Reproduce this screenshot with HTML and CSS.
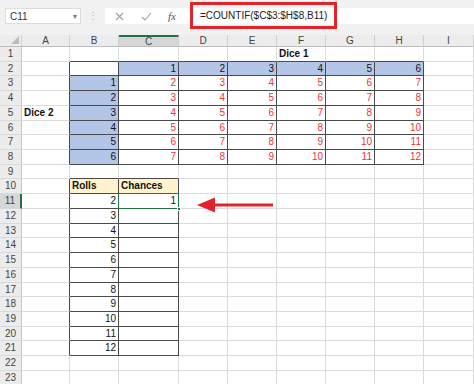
FILE: index.html
```html
<!DOCTYPE html>
<html lang="en">
<head>
  <meta charset="UTF-8">
  <meta name="viewport" content="width=device-width, initial-scale=1.0">
  <title>Dice COUNTIF</title>
  <link rel="stylesheet" href="styles.css">
</head>
<body>
  <div class="toolbar">
    <div class="name-box">C11<span class="drop">&#9662;</span></div>
    <div class="grip">&#8942;</div>
    <div class="formula">
      <div class="fx-icons">
        <svg class="icon" width="9" height="9" viewBox="0 0 9 9"><path d="M1 1L8 8M8 1L1 8" stroke="#a0a0a0" stroke-width="1.1" fill="none"/></svg>
        <svg class="icon" width="11" height="9" viewBox="0 0 11 9"><path d="M1 5L4 8L10 1" stroke="#a0a0a0" stroke-width="1.1" fill="none"/></svg>
        <span class="fx">fx</span>
      </div>
      <div class="formula-text">=COUNTIF($C$3:$H$8,B11)</div>
    </div>
  </div>

  <div class="sheet" id="sheet"></div>

  <svg class="arrow" width="80" height="18" viewBox="0 0 80 18">
    <path d="M18 7.5H77V10.5H18Z" fill="#e3232c"/>
    <path d="M1 9L19 1.5V16.5Z" fill="#e3232c"/>
  </svg>

  <script>
    const sheet = document.getElementById('sheet');
    const letters = ['A', 'B', 'C', 'D', 'E', 'F', 'G', 'H', 'I'];
    const tables = [
      { c1: 2, c2: 8, r1: 2, r2: 8 },
      { c1: 2, c2: 3, r1: 10, r2: 21 }
    ];

    const data = {};
    data['F1'] = { text: 'Dice 1', cls: 'bold' };
    data['A5'] = { text: 'Dice 2', cls: 'bold' };
    for (let i = 1; i <= 6; i++) {
      data[letters[i + 1] + '2'] = { text: i, cls: 'num blue' };
      data['B' + (i + 2)] = { text: i, cls: 'num blue' };
      for (let j = 1; j <= 6; j++) {
        data[letters[j + 1] + (i + 2)] = { text: i + j, cls: 'num red' };
      }
    }
    data['B10'] = { text: 'Rolls', cls: 'bold cream' };
    data['C10'] = { text: 'Chances', cls: 'bold cream' };
    for (let n = 2; n <= 12; n++) {
      data['B' + (n + 9)] = { text: n, cls: 'num' };
    }
    data['C11'] = { text: 1, cls: 'num selected' };

    function inTable(c, r) {
      return tables.some(t => c >= t.c1 && c <= t.c2 && r >= t.r1 && r <= t.r2);
    }

    function addCell(cls, text) {
      const el = document.createElement('div');
      el.className = cls;
      if (text !== undefined) el.textContent = text;
      sheet.appendChild(el);
    }

    addCell('corner');
    letters.forEach(l => addCell('col-head' + (l === 'C' ? ' active' : ''), l));
    for (let r = 1; r <= 23; r++) {
      addCell('row-head' + (r === 11 ? ' active' : ''), r);
      for (let c = 1; c <= 9; c++) {
        const d = data[letters[c - 1] + r] || {};
        let cls = 'cell ' + (d.cls || '');
        if (inTable(c, r) || inTable(c + 1, r)) cls += ' edge-r';
        if (inTable(c, r) || inTable(c, r + 1)) cls += ' edge-b';
        addCell(cls, d.text);
      }
    }
  </script>
</body>
</html>
```

FILE: styles.css
```css
body {
  margin: 0;
  font-family: "Liberation Sans", Arial, sans-serif;
  background-color: #fff;
  overflow: hidden;
  position: relative;
  height: 384px;
}
.toolbar {
  height: 35px;
  box-sizing: border-box;
  background-color: #f1f1f1;
  display: flex;
  align-items: flex-start;
  padding: 8px 0 0 5px;
}
.name-box {
  width: 76px;
  height: 16px;
  box-sizing: border-box;
  background-color: #fff;
  border: 1px solid #dedede;
  display: flex;
  align-items: center;
  justify-content: space-between;
  padding: 0 3px 0 4px;
  font-size: 10px;
  color: #333;
}
.drop {
  font-size: 8px;
  color: #777;
}
.grip {
  width: 24px;
  height: 16px;
  line-height: 16px;
  text-align: center;
  font-size: 10px;
  color: #b0b0b0;
}
.formula {
  flex: 1;
  height: 16px;
  background-color: #fff;
  display: flex;
  align-items: center;
}
.fx-icons {
  display: flex;
  align-items: center;
  width: 95px;
  padding-left: 10px;
  box-sizing: border-box;
}
.icon {
  margin-right: 17px;
}
.icon + .icon {
  margin-right: 16px;
}
.fx {
  font-family: "Liberation Serif", serif;
  font-style: italic;
  font-size: 11px;
  color: #555;
}
.formula-text {
  position: relative;
  font-size: 10px;
  color: #222;
  line-height: 16px;
}
.formula-text::after {
  content: "";
  position: absolute;
  left: -10px;
  right: -10px;
  top: -6px;
  bottom: -5px;
  border: 3px solid #e0242c;
}

.sheet {
  display: grid;
  grid-template-columns: 22px 48px 49px 60px 49px 49px 49px 49px 49px 50px;
  grid-template-rows: 12px repeat(23, 14.73px);
}
.corner {
  background-color: #ececec;
  border-right: 1px solid #cfcfcf;
  border-bottom: 1px solid #bdbdbd;
  position: relative;
}
.corner::after {
  content: "";
  position: absolute;
  right: 2px;
  bottom: 2px;
  border-left: 8px solid transparent;
  border-bottom: 8px solid #bcbcbc;
}
.col-head {
  background-color: #ececec;
  border-right: 1px solid #d0d0d0;
  border-bottom: 1px solid #bdbdbd;
  font-size: 10px;
  line-height: 11px;
  text-align: center;
  color: #444;
}
.col-head.active {
  background-color: #d6d6d6;
  border-top: 2px solid #217346;
  line-height: 9px;
}
.row-head {
  background-color: #ececec;
  border-right: 1px solid #c6c6c6;
  border-bottom: 1px solid #dadada;
  font-size: 10px;
  line-height: 14px;
  text-align: center;
  color: #444;
}
.row-head.active {
  background-color: #d6d6d6;
  border-right: 2px solid #217346;
}
.cell {
  border-right: 1px solid #dcdcdc;
  border-bottom: 1px solid #dcdcdc;
  font-size: 10px;
  line-height: 14px;
  padding: 0 2px;
  white-space: nowrap;
  color: #111;
}
.cell.edge-r {
  border-right-color: #4a4a4a;
}
.cell.edge-b {
  border-bottom-color: #4a4a4a;
}
.num {
  text-align: right;
}
.bold {
  font-weight: bold;
}
.blue {
  background-color: #b4c6e7;
}
.cream {
  background-color: #fff2cc;
}
.red {
  color: #e8343b;
}
.selected {
  position: relative;
}
.selected::before {
  content: "";
  position: absolute;
  left: -1px;
  top: -1px;
  right: -1px;
  bottom: -1px;
  border: 1.5px solid #217346;
}
.selected::after {
  content: "";
  position: absolute;
  right: -3px;
  bottom: -3px;
  width: 4px;
  height: 4px;
  background-color: #217346;
  border: 1px solid #fff;
  box-sizing: border-box;
}
.arrow {
  position: absolute;
  left: 196px;
  top: 196px;
}
```
